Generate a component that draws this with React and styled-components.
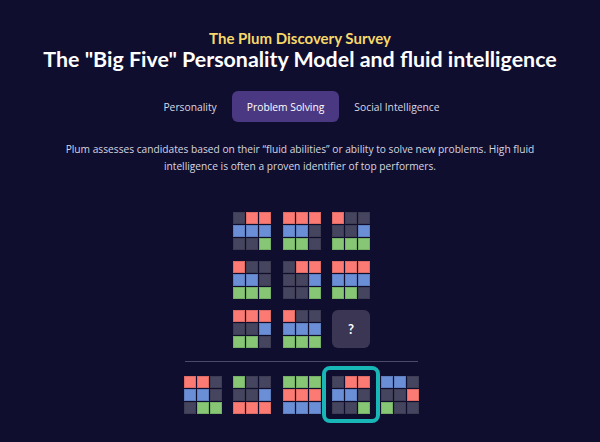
import styled, { createGlobalStyle } from "styled-components";

const R = "r";
const B = "b";
const G = "g";
const _ = "x";

const matrix = [
  [_, R, R, B, B, B, _, _, G],
  [R, R, R, B, B, _, G, G, _],
  [R, _, _, _, _, B, G, G, G],
  [R, _, _, B, B, _, G, G, G],
  [_, R, R, _, _, B, _, _, G],
  [R, R, R, B, B, B, G, G, _],
  [R, R, R, _, _, B, G, G, _],
  [R, _, _, B, B, B, G, G, G],
  null,
];

const answers = [
  [R, R, _, B, B, _, _, G, G],
  [G, _, _, _, _, B, R, R, R],
  [G, G, G, R, R, R, B, B, B],
  [_, R, R, B, B, _, _, _, G],
  [B, B, _, _, _, R, G, _, _],
];

const tabs = ["Personality", "Problem Solving", "Social Intelligence"];

const Puzzle = ({ cells }) => (
  <PuzzleGrid>
    {cells.map((c, i) => (
      <Cell key={i} $tone={c} />
    ))}
  </PuzzleGrid>
);

const App = () => {
  return (
    <>
      <GlobalStyle />
      <Page>
        <Eyebrow>The Plum Discovery Survey</Eyebrow>
        <Title>The "Big Five" Personality Model and fluid intelligence</Title>
        <Tabs>
          {tabs.map(t => (
            <Tab key={t} $active={t === "Problem Solving"}>
              {t}
            </Tab>
          ))}
        </Tabs>
        <Description>
          Plum assesses candidates based on their “fluid abilities” or ability
          to solve new problems. High fluid intelligence is often a proven
          identifier of top performers.
        </Description>
        <Board>
          <Matrix>
            {matrix.map((cells, i) =>
              cells ? <Puzzle key={i} cells={cells} /> : <Unknown key={i}>?</Unknown>
            )}
          </Matrix>
          <Divider />
          <Answers>
            {answers.map((cells, i) => (
              <Option key={i} $selected={i === 3}>
                <Puzzle cells={cells} />
              </Option>
            ))}
          </Answers>
        </Board>
      </Page>
    </>
  );
};

export default App;

/* ---------------------------- Styled Components --------------------------- */

const GlobalStyle = createGlobalStyle`
  body {
    margin: 0;
    background: #0f0e2f;
    font-family: Lato, "Noto Sans", sans-serif;
  }
`;

const Page = styled.div`
  min-height: 100vh;
  display: flex;
  flex-direction: column;
  align-items: center;
  padding-top: 29px;
  box-sizing: border-box;
`;

const Eyebrow = styled.div`
  color: #f6d86a;
  font-size: 15px;
  font-weight: 700;
  line-height: 18px;
`;

const Title = styled.h1`
  margin: 0;
  color: #fff;
  font-size: 21.4px;
  font-weight: 700;
  line-height: 25px;
`;

const Tabs = styled.div`
  display: flex;
  margin: 19px 0 0 3px;
`;

const Tab = styled.div`
  height: 31px;
  padding: 0 15px;
  display: flex;
  align-items: center;
  border-radius: 6px;
  font-family: "Open Sans", "Noto Sans", sans-serif;
  font-size: 10.3px;
  color: ${p => (p.$active ? "#ffffff" : "#d9d8e4")};
  background: ${p => (p.$active ? "#4a3883" : "transparent")};
`;

const Description = styled.p`
  max-width: 490px;
  margin: 19px 0 0;
  text-align: center;
  color: #d6d6e0;
  font-family: "Open Sans", "Noto Sans", sans-serif;
  font-size: 10.2px;
  line-height: 17px;
`;

const Board = styled.div`
  display: flex;
  flex-direction: column;
  align-items: center;
  margin: 37px 0 0 3px;
`;

const Matrix = styled.div`
  display: grid;
  grid-template-columns: repeat(3, 38px);
  gap: 11px 11.5px;
`;

const PuzzleGrid = styled.div`
  display: grid;
  grid-template-columns: repeat(3, 12px);
  grid-auto-rows: 12px;
  gap: 1px;
`;

const tones = {
  r: "#fb7a73",
  b: "#6b8fd7",
  g: "#86c674",
  x: "#46455f",
};

const Cell = styled.div`
  background: ${p => tones[p.$tone]};
  box-shadow: inset 0 0 0 1px rgba(0, 0, 0, 0.12);
`;

const Unknown = styled.div`
  width: 38px;
  height: 38px;
  border-radius: 6px;
  background: #3a3654;
  color: #fff;
  font-size: 13px;
  font-weight: 700;
  display: flex;
  align-items: center;
  justify-content: center;
`;

const Divider = styled.div`
  width: 233px;
  height: 1px;
  margin-top: 13px;
  background: #4b4a6a;
`;

const Answers = styled.div`
  display: flex;
  gap: 11.2px;
  margin-top: 14px;
`;

const Option = styled.div`
  position: relative;

  &::after {
    content: "";
    display: ${p => (p.$selected ? "block" : "none")};
    position: absolute;
    inset: -10px -10px -9px -10px;
    border: 4px solid #19b6b8;
    border-radius: 8px;
  }
`;
